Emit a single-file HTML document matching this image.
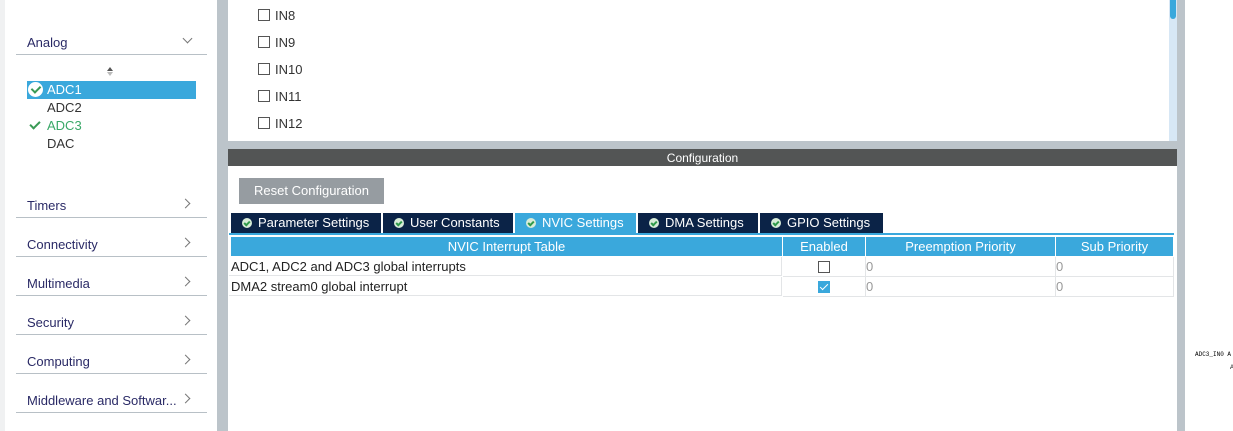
<!DOCTYPE html><html><head><style>
body{margin:0;width:1233px;height:431px;position:relative;overflow:hidden;background:#fff;font-family:"Liberation Sans",sans-serif;font-size:13px;color:#222}
.a{position:absolute}
.side{left:0;top:0;width:217px;height:431px;background:#fff;border-left:5px solid #f0f1f2;box-sizing:border-box}
.cat{position:absolute;left:16px;width:191px;height:26px;border-bottom:1px solid #b8c0c6;color:#2a2a66;font-size:13px}
.cat span{position:absolute;left:11px;bottom:4px}
.cat i{position:absolute;right:18px;bottom:10px;width:6px;height:6px;border-right:1px solid #777;border-top:1px solid #777;transform:rotate(45deg)}
.cb{display:inline-block;width:10px;height:10px;border:1px solid #555;vertical-align:-1px;margin-right:5px;background:#fff}
.in{left:258px;color:#333;font-size:13px}
.tab{top:213px;height:20px;background:#0b2347;color:#fff;font-size:13px;line-height:20px}
.tab b{display:inline-block;width:10px;height:10px;border-radius:50%;background:#d8ecd8;margin:0 6px 0 11px;vertical-align:-1px;position:relative}
.tab b:after{content:"";position:absolute;left:3px;top:1.5px;width:2px;height:4px;border:solid #2f9a4a;border-width:0 2px 2px 0;transform:rotate(45deg)}
.th{top:237px;height:19px;background:#3aa8dc;color:#fff;text-align:center;line-height:19px;font-size:13px}
.td{height:19px;border-bottom:1px solid #e3e5e7;border-right:1px solid #e3e5e7;line-height:19px;color:#999}
</style></head><body>
<div class="a side"></div>
<div class="a" style="left:16px;top:28px;width:191px;height:26px;border-bottom:1px solid #b8c0c6;color:#2a2a66"><span class="a" style="left:11px;top:7px">Analog</span><i class="a" style="right:16px;top:7px;width:6px;height:6px;border-right:1px solid #777;border-bottom:1px solid #777;transform:rotate(45deg)"></i></div>
<div class="a" style="left:107px;top:67px;border:3px solid transparent;border-bottom:4px solid #555;border-top:0"></div>
<div class="a" style="left:107px;top:72px;border:3px solid transparent;border-top:4px solid #bbb;border-bottom:0"></div>
<div class="a" style="left:27px;top:81px;width:169px;height:18px;background:#3aa8dc"></div>
<div class="a" style="left:28px;top:82px;width:15px;height:15px;border-radius:50%;background:#fff"></div>
<div class="a" style="left:33px;top:84px;width:4px;height:7px;border:solid #3a9a55;border-width:0 2.5px 2.5px 0;transform:rotate(45deg)"></div>
<div class="a" style="left:47px;top:82px;color:#fff">ADC1</div>
<div class="a" style="left:47px;top:100px;color:#333">ADC2</div>
<div class="a" style="left:32px;top:119px;width:4px;height:8px;border:solid #3a9a55;border-width:0 2.5px 2.5px 0;transform:rotate(45deg)"></div>
<div class="a" style="left:47px;top:118px;color:#3aa868">ADC3</div>
<div class="a" style="left:47px;top:136px;color:#333">DAC</div>
<div class="cat" style="top:191px"><span>Timers</span><i></i></div>
<div class="cat" style="top:230px"><span>Connectivity</span><i></i></div>
<div class="cat" style="top:269px"><span>Multimedia</span><i></i></div>
<div class="cat" style="top:308px"><span>Security</span><i></i></div>
<div class="cat" style="top:347px"><span>Computing</span><i></i></div>
<div class="cat" style="top:386px"><span>Middleware and Softwar...</span><i></i></div>
<div class="a" style="left:217px;top:0;width:11px;height:431px;background:#bcc4ca"></div>
<div class="a" style="left:1177px;top:0;width:8px;height:431px;background:#bcc4ca"></div>
<div class="a" style="left:228px;top:141px;width:949px;height:8px;background:#bcc4ca"></div>
<div class="a" style="left:1169px;top:0;width:8px;height:141px;background:#d7e7f5"></div>
<div class="a" style="left:1170px;top:0;width:6px;height:19px;background:#3aa8dc;border-radius:0 0 3px 3px"></div>
<div class="a in" style="top:8px"><span class="cb"></span>IN8</div>
<div class="a in" style="top:35px"><span class="cb"></span>IN9</div>
<div class="a in" style="top:62px"><span class="cb"></span>IN10</div>
<div class="a in" style="top:89px"><span class="cb"></span>IN11</div>
<div class="a in" style="top:116px"><span class="cb"></span>IN12</div>
<div class="a" style="left:228px;top:149px;width:949px;height:17px;background:#535555;color:#fff;text-align:center;line-height:18px;font-size:12px">Configuration</div>
<div class="a" style="left:239px;top:178px;width:145px;height:26px;background:#969ca1;color:#fff;text-align:center;line-height:26px">Reset Configuration</div>
<div class="a tab" style="left:231px;width:150px"><b></b>Parameter Settings</div>
<div class="a tab" style="left:383px;width:130px"><b></b>User Constants</div>
<div class="a tab" style="left:515px;width:121px;background:#3aa8dc"><b></b>NVIC Settings</div>
<div class="a tab" style="left:638px;width:120px"><b></b>DMA Settings</div>
<div class="a tab" style="left:760px;width:123px"><b></b>GPIO Settings</div>
<div class="a" style="left:229px;top:233px;width:945px;height:2px;background:#3aa8dc"></div>
<div class="a th" style="left:231px;width:551px">NVIC Interrupt Table</div>
<div class="a th" style="left:783px;width:82px">Enabled</div>
<div class="a th" style="left:866px;width:189px">Preemption Priority</div>
<div class="a th" style="left:1056px;width:117px">Sub Priority</div>
<div class="a td" style="left:229px;top:257px;width:553px;color:#222;padding-left:2px;box-sizing:border-box">ADC1, ADC2 and ADC3 global interrupts</div>
<div class="a td" style="left:229px;top:277px;width:553px;color:#222;padding-left:2px;box-sizing:border-box">DMA2 stream0 global interrupt</div>
<div class="a td" style="left:783px;top:257px;width:82px"></div>
<div class="a td" style="left:783px;top:277px;width:82px"></div>
<div class="a td" style="left:866px;top:257px;width:189px">0</div>
<div class="a td" style="left:866px;top:277px;width:189px">0</div>
<div class="a td" style="left:1056px;top:257px;width:117px">0</div>
<div class="a td" style="left:1056px;top:277px;width:117px">0</div>
<div class="a" style="left:818px;top:261px;width:10px;height:10px;border:1px solid #555"></div>
<div class="a" style="left:818px;top:281px;width:12px;height:12px;background:#3aa8dc"></div>
<div class="a" style="left:822px;top:282px;width:3px;height:7px;border:solid #fff;border-width:0 1.5px 1.5px 0;transform:rotate(45deg)"></div>
<div class="a" style="left:1195px;top:351px;font-size:6px;font-family:'Liberation Mono',monospace;color:#000">ADC3_IN0 A</div>
<div class="a" style="left:1230px;top:365px;font-size:6px;color:#000">A</div>
</body></html>
